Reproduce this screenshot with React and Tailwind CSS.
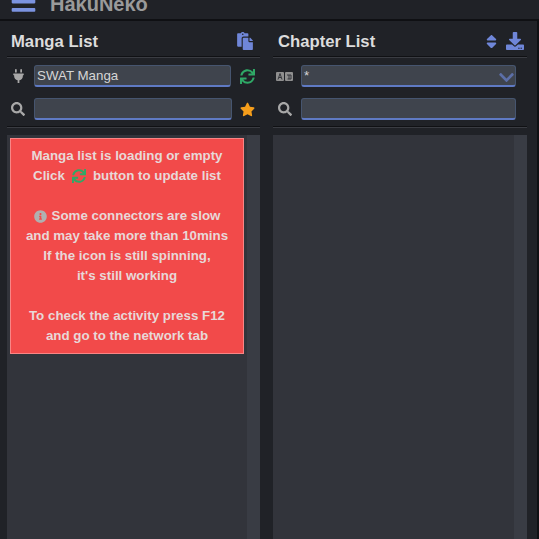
import { FaBars, FaPaste, FaPlug, FaSync, FaSearch, FaStar, FaSort, FaDownload, FaChevronDown, FaInfoCircle } from 'react-icons/fa';

function Divider() {
    return <div className="h-[2px] border-t border-[#101114] bg-[#3a3c42]"></div>;
}

function Field({ value, select }) {
    return (
        <div className="relative h-[22px] flex-1 rounded-[3px] border border-[#46556f] border-b-2 border-b-[#5f7ac4] bg-[#3f444d] pl-[2px] text-[13.33px] leading-[20px] text-[#d6d6d6]">
            {value}
            {select && <FaChevronDown className="absolute right-0 top-[3px] text-[17px] text-[#5c6fa8]" />}
        </div>
    );
}

function LanguageIcon() {
    return (
        <svg className="ml-[3px] mr-[8px] shrink-0" width="17" height="9" viewBox="0 0 17 9">
            <rect x="0" y="0" width="8" height="9" rx="1" fill="#8f8f8f" />
            <rect x="9" y="0" width="8" height="9" rx="1" fill="#8f8f8f" />
            <path d="M2 7.5 4 1.5 6 7.5M3 5.5H5" fill="none" stroke="#33353a" strokeWidth="1" />
            <path d="M11 3H15V7H11.5M13 3V7" fill="none" stroke="#33353a" strokeWidth="1" />
        </svg>
    );
}

function Panel({ title, actions, rows, children, className, titleClass }) {
    return (
        <div className={`flex flex-col ${className}`}>
            <div className="flex h-[35px] items-center justify-between px-1 pt-[5px]">
                <span className={`text-[16.67px] font-bold text-[#dcdcdc] ${titleClass}`}>{title}</span>
                {actions}
            </div>
            <Divider />
            <div className="flex flex-col gap-[11px] pb-[6px] pt-[7px]">{rows}</div>
            <Divider />
            <div className="relative mt-[7px] flex-1 bg-[#32343b]">
                <div className="absolute bottom-0 right-0 top-0 w-[13px] bg-[#393c44]"></div>
                {children}
            </div>
        </div>
    );
}

export default function App() {
    return (
        <div className="flex h-[539px] w-[539px] flex-col overflow-hidden bg-[#202227] font-['Liberation_Sans',Arial,sans-serif]">
            <div className="flex h-[21px] items-end gap-[13px] overflow-hidden border-b-2 border-[#0f1013] pl-[10px]">
                <FaBars className="mb-[4px] shrink-0 text-[27px] text-[#7b93e0]" />
                <span className="mb-[3px] text-[20px] font-bold leading-[24px] text-[#9a9a9a]">HakuNeko</span>
            </div>
            <div className="flex flex-1 border-r-2 border-[#0f1013] pr-[4px]">
                <Panel
                    className="ml-[7px] w-[253px]"
                    title="Manga List"
                    actions={<FaPaste className="mr-[2px] mt-[-1px] text-[18px] text-[#6f86d8]" />}
                    rows={
                        <>
                            <div className="flex items-center">
                                <FaPlug className="ml-[6px] mr-[10px] w-[11px] text-[14px] text-[#a8a8a8]" />
                                <Field value="SWAT Manga" />
                                <FaSync className="ml-[9px] mr-[5px] text-[15px] text-[#2fa866]" />
                            </div>
                            <div className="flex items-center">
                                <FaSearch className="ml-[4px] mr-[9px] w-[14px] text-[14px] text-[#a8a8a8]" />
                                <Field />
                                <FaStar className="ml-[8px] mr-[5px] text-[15px] text-[#f59e1b]" />
                            </div>
                        </>
                    }
                >
                    <div className="relative ml-[3px] mt-[3px] flex h-[216px] w-[234px] flex-col items-center justify-center border border-[#f98585] bg-[#f24a4a] text-center text-[13.33px] font-bold leading-[20px] text-[#e8d8d8]">
                        <div>Manga list is loading or empty</div>
                        <div className="flex items-center gap-[7px]">
                            Click <FaSync className="text-[14px] text-[#2fa866]" /> button to update list
                        </div>
                        <br />
                        <div className="flex items-center gap-[5px]">
                            <FaInfoCircle className="text-[13px] text-[#b0b0b0]" /> Some connectors are slow
                        </div>
                        <div>and may take more than 10mins</div>
                        <div>If the icon is still spinning,</div>
                        <div>it's still working</div>
                        <br />
                        <div>To check the activity press F12</div>
                        <div>and go to the network tab</div>
                    </div>
                </Panel>
                <Panel
                    className="ml-[13px] w-[254px]"
                    title="Chapter List"
                    titleClass="ml-[1px]"
                    actions={
                        <div className="mr-[-1px] flex items-center gap-[6px] text-[#6f86d8]">
                            <FaSort className="text-[17px]" />
                            <FaDownload className="text-[18px]" />
                        </div>
                    }
                    rows={
                        <>
                            <div className="flex items-center">
                                <LanguageIcon />
                                <Field value="*" select />
                                <div className="w-[11px]"></div>
                            </div>
                            <div className="flex items-center">
                                <FaSearch className="ml-[5px] mr-[9px] w-[14px] text-[14px] text-[#a8a8a8]" />
                                <Field />
                                <div className="w-[11px]"></div>
                            </div>
                        </>
                    }
                />
            </div>
        </div>
    );
}
